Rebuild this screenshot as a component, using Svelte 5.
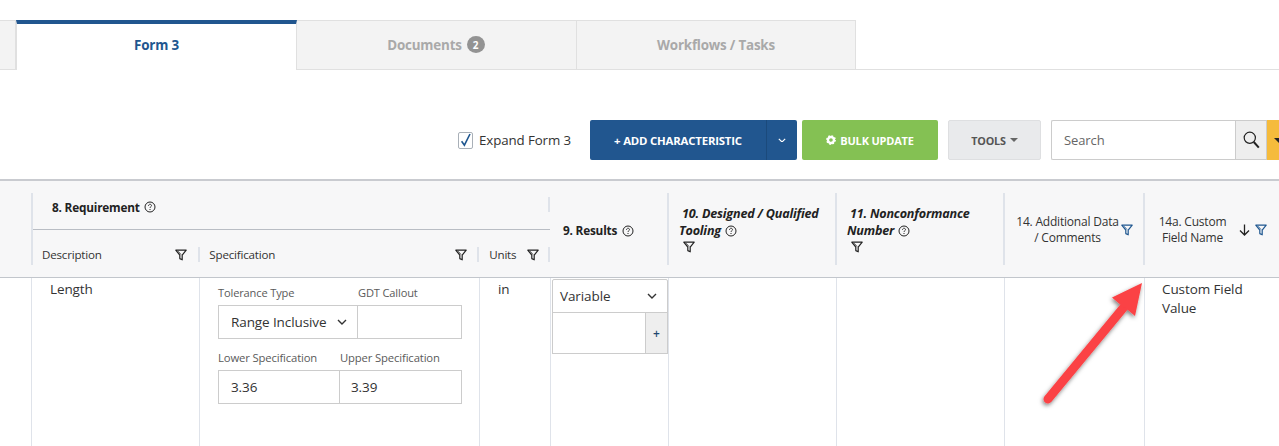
<script>
  const subCols = [
    { label: 'Description', cls: 'c-desc' },
    { label: 'Specification', cls: 'c-spec' },
    { label: 'Units', cls: 'c-units' }
  ];
</script>

{#snippet funnel(color = '#222')}
  <svg class="funnel" width="12" height="12" viewBox="0 0 12 12" fill="none" stroke={color} stroke-width="1.2" stroke-linejoin="round"><path d="M0.8 1.2h10.4L7.2 6.2v4.6l-2.4-1.2V6.2z" /><path d="M3 2.2l3 3.4" stroke-width="0.9" /></svg>
{/snippet}

{#snippet help()}
  <svg class="help" width="12" height="12" viewBox="0 0 12 12" fill="none" stroke="#222" stroke-width="1"><circle cx="6" cy="6" r="5" /><path d="M4.5 4.8c0-2 3-2 3-.2 0 1.2-1.5 1.1-1.5 2.4" stroke-width="0.9" /><path d="M6 8v1" stroke-width="1" /></svg>
{/snippet}

{#snippet chevron(color = '#333', w = 10)}
  <svg width={w} height={w * 0.6} viewBox="0 0 10 6" fill="none" stroke={color} stroke-width="1.4"><path d="M1 1l4 4 4-4" /></svg>
{/snippet}

<div class="page">
  <nav class="tabs">
    <div class="tab stub"></div>
    <div class="tab active">Form 3</div>
    <div class="tab">Documents <span class="badge">2</span></div>
    <div class="tab">Workflows / Tasks</div>
  </nav>

  <div class="toolbar">
    <label class="expand">
      <span class="check">
        <svg width="12" height="14" viewBox="0 0 12 14" fill="none" stroke="#1f5790" stroke-width="1.6"><path d="M1.6 8.2l2.8 4L10 1" /></svg>
      </span>
      Expand Form 3
    </label>
    <div class="split">
      <button class="btn blue main">+ ADD CHARACTERISTIC</button>
      <button class="btn blue caret">{@render chevron('#fff', 8)}</button>
    </div>
    <button class="btn green">
      <svg width="10" height="10" viewBox="0 0 10 10"><circle cx="5" cy="5" r="3" fill="none" stroke="#fff" stroke-width="2.4" /><circle cx="5" cy="5" r="4.2" fill="none" stroke="#fff" stroke-width="1.4" stroke-dasharray="1.6 1.7" /></svg>
      BULK UPDATE
    </button>
    <button class="btn tools">TOOLS <i class="down"></i></button>
    <div class="search">
      <input placeholder="Search" />
      <button class="go" aria-label="Search">
        <svg width="17" height="18" viewBox="0 0 17 18" fill="none" stroke="#222"><circle cx="6.8" cy="6.8" r="5.6" stroke-width="1.2" /><path d="M10.8 11l5 5.6" stroke-width="2" /></svg>
      </button>
      <button class="yellow" aria-label="Filter"><i class="down dark"></i></button>
    </div>
  </div>

  <div class="table">
    <div class="head">
      <div class="hc stub-col"></div>
      <div class="hc group">
        <div class="group-title"><b>8. Requirement</b> {@render help()}<span class="tick"></span></div>
        <div class="group-subs">
          {#each subCols as col}
            <div class="sub {col.cls}"><span>{col.label}</span>{@render funnel()}</div>
          {/each}
        </div>
      </div>
      <div class="hc results"><b>9. Results</b> {@render help()}</div>
      <div class="hc ital">
        <div class="t"><b><i>10. Designed / Qualified Tooling</i></b> {@render help()}</div>
        <div class="f">{@render funnel()}</div>
      </div>
      <div class="hc ital">
        <div class="t"><b><i>11. Nonconformance Number</i></b> {@render help()}</div>
        <div class="f">{@render funnel()}</div>
      </div>
      <div class="hc plain add">
        <div class="lbl">14. Additional Data<br />/ Comments</div>
        {@render funnel('#1f5790')}
      </div>
      <div class="hc plain custom">
        <div class="lbl">14a. Custom<br />Field Name</div>
        <svg class="sort" width="11" height="12" viewBox="0 0 11 12" fill="none" stroke="#222" stroke-width="1.3"><path d="M5.5 0.5v10.5M1 6.5l4.5 4.5L10 6.5" /></svg>
        {@render funnel('#1f5790')}
      </div>
    </div>

    <div class="body">
      <div class="bc"></div>
      <div class="bc txt desc">Length</div>
      <div class="bc spec">
        <div class="frow top-labels"><span class="l1">Tolerance Type</span><span>GDT Callout</span></div>
        <div class="frow boxes first">
          <div class="box sel">Range Inclusive {@render chevron()}</div>
          <div class="box gdt"></div>
        </div>
        <div class="frow bottom-labels"><span class="l2">Lower Specification</span><span>Upper Specification</span></div>
        <div class="frow boxes second">
          <div class="box low">3.36</div>
          <div class="box up">3.39</div>
        </div>
      </div>
      <div class="bc txt units">in</div>
      <div class="bc res">
        <div class="box variable">Variable {@render chevron()}</div>
        <div class="res-row">
          <div class="box val"></div>
          <div class="box plus">+</div>
        </div>
      </div>
      <div class="bc"></div>
      <div class="bc"></div>
      <div class="bc"></div>
      <div class="bc txt cfv">Custom Field Value</div>
    </div>

    <svg class="arrow" width="120" height="140" viewBox="1035 275 120 140">
      <defs>
        <filter id="sh" x="-30%" y="-30%" width="160%" height="160%">
          <feDropShadow dx="-1" dy="2" stdDeviation="2" flood-color="#000" flood-opacity="0.5" />
        </filter>
      </defs>
      <g filter="url(#sh)" fill="#fb4245">
        <path d="M1048 399L1124 307" stroke="#fb4245" stroke-width="9" stroke-linecap="round" />
        <path d="M1142 283L1112 297.5 1119 303.5 1128.5 310.5 1135 316z" />
      </g>
    </svg>
  </div>
</div>

<style>
  :global(body) { margin: 0; overflow: hidden; background: #fff; }
  .page {
    width: 1279px;
    height: 446px;
    overflow: hidden;
    padding-top: 20px;
    box-sizing: border-box;
    font-family: "Open Sans", "Noto Sans", sans-serif;
    color: #222;
  }
  .tabs {
    display: flex;
    height: 50px;
    box-sizing: border-box;
    border-bottom: 1px solid #e0e0e0;
  }
  .tab {
    width: 280px;
    height: 50px;
    box-sizing: border-box;
    background: #f3f3f3;
    border: 1px solid #e0e0e0;
    border-left: 0;
    display: flex;
    align-items: center;
    justify-content: center;
    gap: 5px;
    color: #a9a9a9;
    font-weight: 700;
    font-size: 13.4px;
    letter-spacing: -0.2px;
    padding-bottom: 1px;
  }
  .tab.stub { width: 16px; }
  .tab.active {
    background: #fff;
    border-top: 4px solid #21568f;
    border-bottom: 0;
    border-left: 1px solid #e0e0e0;
    border-right: 1px solid #e0e0e0;
    width: 281px;
    margin-right: -1px;
    color: #21568f;
    padding-bottom: 5px;
    position: relative;
    z-index: 1;
  }
  .tab:last-child { margin-left: -1px; border-left: 1px solid #e0e0e0; border-right: 1px solid #e0e0e0; }
  .tab:nth-child(3) { width: 281px; }
  .badge {
    width: 18px; height: 17px;
    border-radius: 50%;
    background: #939393;
    color: #fff;
    font-size: 10px;
    display: inline-flex;
    align-items: center;
    justify-content: center;
    letter-spacing: 0;
  }
  .toolbar {
    display: flex;
    align-items: stretch;
    height: 40px;
    margin-top: 50px;
    padding-left: 458px;
    width: 900px;
    white-space: nowrap;
  }
  .expand {
    display: flex;
    align-items: center;
    gap: 6px;
    font-size: 13.3px;
    letter-spacing: -0.1px;
    color: #333;
    width: 132px;
    flex: none;
  }
  .check {
    width: 13px; height: 15px;
    border: 1px solid #a9b0b8;
    border-radius: 2px;
    display: flex;
    align-items: center;
    justify-content: center;
    flex: none;
  }
  .btn {
    border: 0;
    padding: 0;
    font-family: inherit;
    font-weight: 700;
    font-size: 11.4px;
    height: 40px;
    display: inline-flex;
    align-items: center;
    justify-content: center;
    gap: 4px;
    border-radius: 2px;
    letter-spacing: -0.2px;
    flex: none;
  }
  .split { display: flex; margin-right: 5px; flex: none; }
  .blue { background: #21568f; color: #fff; }
  .main { width: 177px; border-radius: 2px 0 0 2px; border-right: 1px solid #1b4a7c; }
  .caret { width: 30px; border-radius: 0 2px 2px 0; }
  .green { width: 136px; background: #84c153; color: #fff; margin-right: 10px; font-size: 11px; }
  .tools {
    width: 93px;
    background: #e9eaec;
    border: 1px solid #dedfe1;
    color: #555;
    margin-right: 10px;
    box-sizing: border-box;
    font-size: 10.8px;
  }
  .down {
    display: inline-block;
    border: 4px solid transparent;
    border-top-color: #666;
    border-bottom: 0;
  }
  .down.dark { border-top-color: #222; border-width: 5px 5px 0; }
  .search { display: flex; height: 40px; flex: none; }
  .search input {
    width: 184px;
    height: 40px;
    box-sizing: border-box;
    border: 1px solid #ccc;
    border-right: 0;
    border-radius: 2px 0 0 2px;
    padding: 0 12px;
    font: 13px "Open Sans", sans-serif;
    letter-spacing: -0.1px;
    outline: none;
  }
  .search input::placeholder { color: #666; opacity: 1; }
  .go {
    width: 32px;
    height: 40px;
    box-sizing: border-box;
    padding: 0;
    border: 1px solid #ccc;
    background: #eee;
    display: flex;
    align-items: center;
    justify-content: center;
  }
  .yellow {
    width: 40px;
    height: 40px;
    border: 0;
    padding: 0 0 0 7px;
    background: #f5bb3c;
    display: flex;
    align-items: center;
  }

  .table {
    position: relative;
    margin-top: 19px;
    width: 1279px;
  }
  .head {
    display: grid;
    grid-template-columns: 31px 519px 118px 168px 168px 140px 135px;
    height: 99px;
    box-sizing: border-box;
    background: #f7f7f8;
    border-top: 2px solid #c9cbd0;
    border-bottom: 1px solid #c2c6cc;
    padding: 12px 0;
    font-size: 11.8px;
    line-height: 17px;
    letter-spacing: -0.2px;
  }
  .hc {
    border-left: 2px solid #dfe3ea;
    min-width: 0;
    box-sizing: border-box;
  }
  .stub-col { border: 0; }
  .group {
    display: flex;
    flex-direction: column;
  }
  .group-title {
    display: flex;
    align-items: center;
    gap: 3px;
    height: 37px;
    box-sizing: border-box;
    padding: 0 0 8px 19px;
    border-bottom: 1px solid #b9bdc4;
    position: relative;
  }
  .tick {
    position: absolute;
    right: 0;
    top: 4px;
    width: 2px;
    height: 15px;
    background: #dfe3ea;
  }
  .group-subs { display: flex; flex: 1; align-items: center; }
  .sub {
    display: flex;
    align-items: center;
    justify-content: space-between;
    box-sizing: border-box;
    height: 15px;
    color: #333;
    margin-top: 14px;
    border-right: 2px solid #dfe3ea;
    font-size: 11.6px;
  }
  .c-desc { width: 168px; padding: 0 11px 0 9px; }
  .c-spec { width: 280px; padding: 0 10px 0 9px; }
  .c-units { width: 71px; padding: 0 9px 0 10px; }
  .funnel { flex: none; }
  .help { flex: none; vertical-align: -2px; margin-left: 1px; }
  .results {
    border-left: 0;
    display: flex;
    align-items: center;
    gap: 4px;
    padding-left: 13px;
    padding-top: 3px;
  }
  .ital {
    padding: 12px 6px 0 10px;
    font-size: 12.6px;
    line-height: 17px;
    margin-left: -1px;
  }
  .ital .t { text-indent: 3px; }
  .ital .f { padding-left: 4px; line-height: 12px; margin-top: 2px; }
  .plain {
    display: flex;
    align-items: center;
    color: #333;
    font-size: 12px;
    line-height: 16px;
    margin-left: -1px;
    padding-top: 2px;
  }
  .plain .lbl { text-align: center; flex: none; white-space: nowrap; }
  .add { padding-left: 11px; }
  .add .lbl { width: 103px; margin-right: 2px; }
  .custom { padding-left: 10px; }
  .custom .lbl { width: 75px; }
  .sort { margin-left: 9px; margin-right: 5px; flex: none; }

  .body {
    display: grid;
    grid-template-columns: 31px 168px 280px 71px 118px 168px 168px 140px 135px;
    height: 169px;
  }
  .bc {
    border-left: 1px solid #dfe3ea;
    box-sizing: border-box;
    min-width: 0;
    font-size: 13px;
  }
  .bc:first-child { border: 0; }
  .txt { font-size: 13.5px; line-height: 19px; padding-top: 2px; color: #333; letter-spacing: -0.1px; }
  .desc { padding-left: 18px; }
  .units { padding-left: 18px; }
  .cfv { padding: 2px 14px 0 17px; }
  .spec { padding: 7px 0 0 18px; }
  .frow { display: flex; width: 244px; }
  .top-labels, .bottom-labels {
    font-size: 11.1px;
    color: #5a5a5a;
    letter-spacing: -0.15px;
    line-height: 16px;
    height: 20px;
  }
  .bottom-labels { font-size: 11.3px; margin-top: 11px; }
  .l1 { width: 140px; }
  .l2 { width: 122px; }
  .box {
    border: 1px solid #ccc;
    box-sizing: border-box;
    height: 34px;
    display: flex;
    align-items: center;
    font-size: 13.5px;
    letter-spacing: -0.1px;
    color: #333;
  }
  .sel { width: 140px; padding: 0 10px 0 12px; justify-content: space-between; white-space: nowrap; }
  .gdt { width: 105px; margin-left: -1px; }
  .low { width: 122px; padding-left: 12px; }
  .up { width: 123px; margin-left: -1px; padding-left: 11px; }
  .res { padding: 1px 0 0 1px; }
  .variable { width: 116px; height: 34px; padding: 0 10px 0 7px; justify-content: space-between; border-radius: 2px 2px 0 0; }
  .res-row { display: flex; margin-top: -1px; }
  .val { width: 94px; height: 42px; }
  .plus {
    width: 23px;
    height: 42px;
    margin-left: -1px;
    background: #eee;
    justify-content: center;
    font-size: 12px;
    font-weight: 600;
    color: #21466f;
  }
  .arrow {
    position: absolute;
    left: 1035px;
    top: 96px;
    pointer-events: none;
  }
</style>
